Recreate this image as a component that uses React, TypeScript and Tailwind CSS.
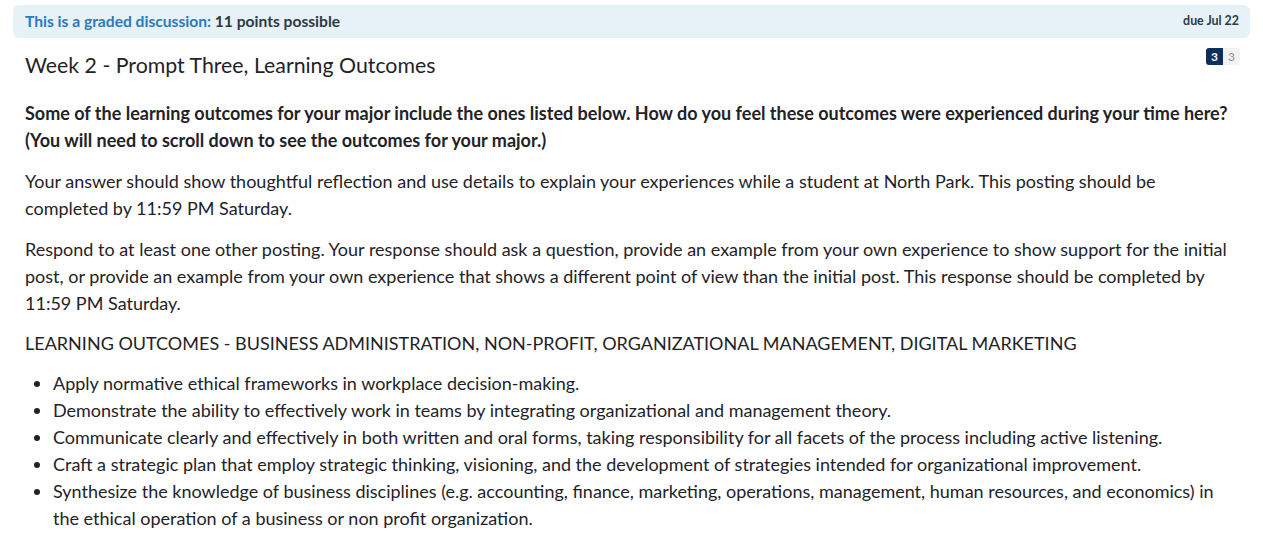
import React from 'react';

const outcomes = [
  'Apply normative ethical frameworks in workplace decision-making.',
  'Demonstrate the ability to effectively work in teams by integrating organizational and management theory.',
  'Communicate clearly and effectively in both written and oral forms, taking responsibility for all facets of the process including active listening.',
  'Craft a strategic plan that employ strategic thinking, visioning, and the development of strategies intended for organizational improvement.',
  'Synthesize the knowledge of business disciplines (e.g. accounting, finance, marketing, operations, management, human resources, and economics) in the ethical operation of a business or non profit organization.',
];

const App: React.FC = () => {
  return (
    <div className="min-h-screen bg-white text-[#1f2327]" style={{ fontFamily: 'Lato, "Noto Sans", sans-serif' }}>
      {/* Graded banner */}
      <div className="px-[13px] pt-[5px]">
        <div className="flex h-[33px] items-center justify-between rounded-md bg-[#e6f1f8] pl-[12px] pr-[11px]">
          <p className="text-[15.6px] font-bold">
            <span className="text-[#2b7abc]">This is a graded discussion:</span>{' '}
            <span className="text-[#2d3b45]">11 points possible</span>
          </p>
          <span className="text-[12.4px] font-bold text-[#2d3b45]">due Jul 22</span>
        </div>
      </div>

      <div className="px-[25px]">
        {/* Title row */}
        <div className="flex items-start justify-between pt-[12px]">
          <h1 className="text-[21.3px] leading-[30px] font-normal text-[#1f2327]">
            Week 2 - Prompt Three, Learning Outcomes
          </h1>
          <div className="mt-[-2px] mr-[-2px] flex h-[17px] overflow-hidden rounded-[3px] text-[12px] leading-[17px]">
            <span className="bg-[#0b2e5c] px-[5px] font-bold text-white">3</span>
            <span className="bg-[#f2f2f2] px-[5px] text-[#8b939a]">3</span>
          </div>
        </div>

        {/* Body */}
        <div className="pt-[20px] text-[18px] leading-[27px]">
          <p className="font-bold">
            Some of the learning outcomes for your major include the ones listed below. How do you feel these outcomes were experienced during your time here? (You will need to scroll down to see the outcomes for your major.)
          </p>
          <p className="mt-[14px]">
            Your answer should show thoughtful reflection and use details to explain your experiences while a student at North Park. This posting should be completed by 11:59 PM Saturday.
          </p>
          <p className="mt-[14px]">
            Respond to at least one other posting. Your response should ask a question, provide an example from your own experience to show support for the initial post, or provide an example from your own experience that shows a different point of view than the initial post. This response should be completed by 11:59 PM Saturday.
          </p>
          <p className="mt-[13px]">
            LEARNING OUTCOMES - BUSINESS ADMINISTRATION, NON-PROFIT, ORGANIZATIONAL MANAGEMENT, DIGITAL MARKETING
          </p>
          <ul className="mt-[13px] list-disc pl-[28px] pr-[10px]">
            {outcomes.map((item) => (
              <li key={item}>{item}</li>
            ))}
          </ul>
        </div>
      </div>
    </div>
  );
};

export default App;
